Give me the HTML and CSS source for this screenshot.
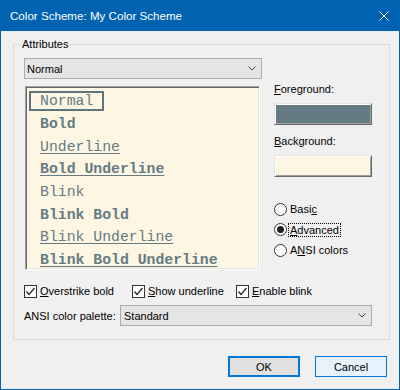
FILE: index.html
```html
<!DOCTYPE html>
<html lang="en">
<head>
    <meta charset="UTF-8" />
    <title>Color Scheme: My Color Scheme</title>
    <link rel="stylesheet" href="styles.css">
</head>
<body>
    <div class="window">
        <div class="titlebar">
            <span class="title">Color Scheme: My Color Scheme</span>
            <svg class="close" width="10" height="10" viewBox="0 0 10 10">
                <path d="M0.5 0.5 L9.5 9.5 M9.5 0.5 L0.5 9.5" stroke="#fff" stroke-width="1" fill="none" />
            </svg>
        </div>

        <div class="dialog">
            <fieldset class="group">
                <legend>Attributes</legend>

                <div class="attr-grid">
                    <div class="left-col">
                        <div class="combo">
                            <span>Normal</span>
                            <svg class="chevron" width="8" height="5" viewBox="0 0 8 5">
                                <path d="M0.5 0.5 L4 4 L7.5 0.5" stroke="#444" stroke-width="1" fill="none" />
                            </svg>
                        </div>
                        <ul class="listbox">
                            <li><span class="focus">Normal</span></li>
                            <li class="bold">Bold</li>
                            <li class="under">Underline</li>
                            <li class="bold under">Bold Underline</li>
                            <li>Blink</li>
                            <li class="bold">Blink Bold</li>
                            <li class="under">Blink Underline</li>
                            <li class="bold under">Blink Bold Underline</li>
                        </ul>
                    </div>

                    <div class="right-col">
                        <div class="lbl"><u>F</u>oreground:</div>
                        <div class="swatch swatch-fg"></div>
                        <div class="lbl lbl-bg"><u>B</u>ackground:</div>
                        <div class="swatch swatch-bg"></div>

                        <div class="radios">
                            <div class="radio"><span class="circle"></span><span class="rtext">Basi<u>c</u></span></div>
                            <div class="radio"><span class="circle checked"></span><span class="rtext focused"><u>A</u>dvanced</span></div>
                            <div class="radio"><span class="circle"></span><span class="rtext">A<u>N</u>SI colors</span></div>
                        </div>
                    </div>
                </div>

                <div class="checks">
                    <div class="check"><span class="box"><svg width="11" height="11" viewBox="0 0 11 11"><path d="M1.5 5.5 L4 8.5 L9.5 2" stroke="#222" stroke-width="1.2" fill="none" /></svg></span><u>O</u>verstrike bold</div>
                    <div class="check"><span class="box"><svg width="11" height="11" viewBox="0 0 11 11"><path d="M1.5 5.5 L4 8.5 L9.5 2" stroke="#222" stroke-width="1.2" fill="none" /></svg></span><u>S</u>how underline</div>
                    <div class="check"><span class="box"><svg width="11" height="11" viewBox="0 0 11 11"><path d="M1.5 5.5 L4 8.5 L9.5 2" stroke="#222" stroke-width="1.2" fill="none" /></svg></span><u>E</u>nable blink</div>
                </div>

                <div class="palette-row">
                    <span class="palette-label">ANSI color palette:</span>
                    <div class="combo combo-palette">
                        <span>Standard</span>
                        <svg class="chevron" width="8" height="5" viewBox="0 0 8 5">
                            <path d="M0.5 0.5 L4 4 L7.5 0.5" stroke="#444" stroke-width="1" fill="none" />
                        </svg>
                    </div>
                </div>
            </fieldset>

            <div class="buttons">
                <button class="btn btn-default">OK</button>
                <button class="btn btn-hover">Cancel</button>
            </div>
        </div>
    </div>
</body>
</html>
```

FILE: styles.css
```css
* {
    margin: 0;
    padding: 0;
    box-sizing: border-box;
}

body {
    background-color: #f0f0f0;
    font-family: "Liberation Sans", Arial, sans-serif;
    font-size: 11px;
    color: #000;
}

.window {
    width: 400px;
    height: 390px;
    background-color: #0063b1;
    display: flex;
    flex-direction: column;
}

.titlebar {
    height: 31px;
    display: flex;
    align-items: center;
    justify-content: space-between;
    padding: 0 11px 0 10px;
    color: #fff;
    font-size: 11.6px;
}

.close {
    display: block;
}

.dialog {
    flex: 1;
    margin: 0 1px 1px 1px;
    background-color: #f0f0f0;
    display: flex;
    flex-direction: column;
}

/* group box */
.group {
    margin: 6px 9px 0 12px;
    border: 1px solid #dcdcdc;
    padding: 6px 10px 13px 10px;
}

.group legend {
    margin-left: -3px;
    padding: 0 1px;
    line-height: 15px;
}

.attr-grid {
    display: flex;
    gap: 12px;
}

.left-col {
    width: 238px;
}

.combo {
    height: 21px;
    border: 1px solid #acacac;
    background-color: #e5e5e5;
    display: flex;
    align-items: center;
    justify-content: space-between;
    padding: 0 5px 0 2px;
}

.chevron {
    display: block;
}

.listbox {
    list-style: none;
    margin: 7px 0 0 1px;
    width: 235px;
    height: 184px;
    background-color: #fdf6e3;
    border: 1px solid;
    border-color: #a0a0a0 #ffffff #ffffff #a0a0a0;
    box-shadow: inset 1px 1px 0 #696969, inset -1px -1px 0 #e3e3e3;
    padding: 3px 0 0 3px;
    font-family: "Liberation Mono", "Courier New", monospace;
    font-size: 14.8px;
    color: #657b83;
    overflow: hidden;
}

.listbox li {
    height: 22.7px;
    display: flex;
    align-items: center;
    padding-left: 11px;
}

.listbox li:first-child {
    padding-left: 0;
}

.listbox .bold {
    font-weight: bold;
}

.listbox .under {
    text-decoration: underline;
    text-underline-offset: 2px;
}

.focus {
    display: inline-flex;
    align-items: center;
    height: 20px;
    border: 2px solid #5f747b;
    padding: 0 9px;
}

/* colour swatches and mode */
.right-col {
    width: 98px;
    padding-top: 24px;
}

.lbl {
    line-height: 15px;
}

.lbl-bg {
    margin-top: 9px;
}

.swatch {
    height: 22px;
    margin-top: 6px;
    border: 1px solid;
    border-color: #e3e3e3 #696969 #696969 #e3e3e3;
    box-shadow: inset 1px 1px 0 #ffffff, inset -1px -1px 0 #a0a0a0;
}

.swatch-fg {
    background-color: #657b83;
}

.swatch-bg {
    background-color: #fdf6e3;
}

.radios {
    margin-top: 22px;
}

.radio {
    height: 20.5px;
    display: flex;
    align-items: center;
}

.circle {
    width: 13px;
    height: 13px;
    border: 1px solid #333;
    border-radius: 50%;
    background-color: #fff;
    display: flex;
    align-items: center;
    justify-content: center;
}

.circle.checked::after {
    content: "";
    width: 7px;
    height: 7px;
    border-radius: 50%;
    background-color: #222;
}

.rtext {
    margin-left: 1px;
    padding: 0 1px;
    border: 1px dotted transparent;
    line-height: 12px;
}

.rtext.focused {
    border-color: #000;
}

/* checkboxes */
.checks {
    margin-top: 13px;
    height: 16px;
    display: grid;
    grid-template-columns: 108px 104px auto;
    align-items: center;
}

.check {
    display: flex;
    align-items: center;
}

.box {
    width: 13px;
    height: 13px;
    border: 1px solid #333;
    background-color: #fff;
    margin-right: 3px;
    display: flex;
    align-items: center;
    justify-content: center;
}

.box svg {
    display: block;
}

.palette-row {
    margin-top: 6px;
    display: flex;
    align-items: center;
}

.palette-label {
    width: 96px;
    white-space: nowrap;
}

.combo-palette {
    width: 252px;
    padding-left: 3px;
}

/* dialog buttons */
.buttons {
    margin-top: 16px;
    padding-right: 12px;
    display: flex;
    justify-content: flex-end;
    gap: 15px;
}

.btn {
    width: 72px;
    height: 21px;
    font-family: "Liberation Sans", Arial, sans-serif;
    font-size: 11px;
    color: #000;
    background-color: #e1e1e1;
    border: 1px solid #adadad;
}

.btn-default {
    border: 2px solid #0078d7;
}

.btn-hover {
    background-color: #e5f1fb;
    border-color: #0078d7;
}
```
